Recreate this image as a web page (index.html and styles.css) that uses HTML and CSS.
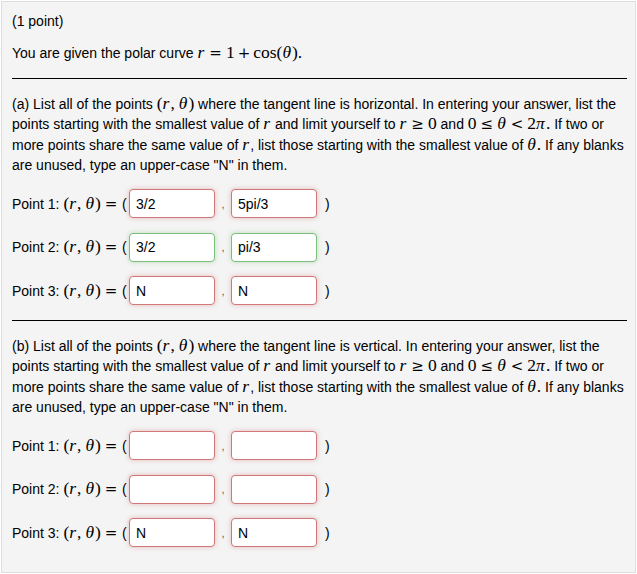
FILE: index.html
```html
<!DOCTYPE html>
<html>
<head>
<meta charset="utf-8">
<link rel="stylesheet" href="styles.css">
</head>
<body>
<div class="problem">
  <p class="pts">(1 point)</p>
  <p class="intro">You are given the polar curve <span class="m"><i>r</i><span class="o">=</span>1<span class="o b">+</span>cos(<i>θ</i>).</span></p>
  <hr class="rule">
  <p class="para">(a) List all of the points <span class="m">(<i>r</i>,<span class="ts"></span><i>θ</i>)</span> where the tangent line is horizontal. In entering your answer, list the<br>points starting with the smallest value of <span class="m"><i>r</i></span> and limit yourself to <span class="m"><i>r</i><span class="o">≥</span>0</span> and <span class="m">0<span class="o">≤</span><i>θ</i><span class="o">&lt;</span>2<i>π</i>.</span> If two or<br>more points share the same value of <span class="m"><i>r</i></span>, list those starting with the smallest value of <span class="m"><i>θ</i>.</span> If any blanks<br>are unused, type an upper-case "N" in them.</p>
  <div class="points">
    <div class="row"><span class="lead">Point 1: <span class="m">(<i>r</i>,<span class="ts"></span><i>θ</i>)<span class="o">=</span></span></span><span class="par">(</span><span class="box bad">3/2</span><span class="comma">,</span><span class="box bad">5pi/3</span><span class="close">)</span></div>
    <div class="row"><span class="lead">Point 2: <span class="m">(<i>r</i>,<span class="ts"></span><i>θ</i>)<span class="o">=</span></span></span><span class="par">(</span><span class="box good">3/2</span><span class="comma">,</span><span class="box good">pi/3</span><span class="close">)</span></div>
    <div class="row"><span class="lead">Point 3: <span class="m">(<i>r</i>,<span class="ts"></span><i>θ</i>)<span class="o">=</span></span></span><span class="par">(</span><span class="box bad">N</span><span class="comma">,</span><span class="box bad">N</span><span class="close">)</span></div>
  </div>
  <hr class="rule">
  <p class="para">(b) List all of the points <span class="m">(<i>r</i>,<span class="ts"></span><i>θ</i>)</span> where the tangent line is vertical. In entering your answer, list the<br>points starting with the smallest value of <span class="m"><i>r</i></span> and limit yourself to <span class="m"><i>r</i><span class="o">≥</span>0</span> and <span class="m">0<span class="o">≤</span><i>θ</i><span class="o">&lt;</span>2<i>π</i>.</span> If two or<br>more points share the same value of <span class="m"><i>r</i></span>, list those starting with the smallest value of <span class="m"><i>θ</i>.</span> If any blanks<br>are unused, type an upper-case "N" in them.</p>
  <div class="points">
    <div class="row"><span class="lead">Point 1: <span class="m">(<i>r</i>,<span class="ts"></span><i>θ</i>)<span class="o">=</span></span></span><span class="par">(</span><span class="box bad"></span><span class="comma">,</span><span class="box bad"></span><span class="close">)</span></div>
    <div class="row"><span class="lead">Point 2: <span class="m">(<i>r</i>,<span class="ts"></span><i>θ</i>)<span class="o">=</span></span></span><span class="par">(</span><span class="box bad"></span><span class="comma">,</span><span class="box bad"></span><span class="close">)</span></div>
    <div class="row"><span class="lead">Point 3: <span class="m">(<i>r</i>,<span class="ts"></span><i>θ</i>)<span class="o">=</span></span></span><span class="par">(</span><span class="box bad">N</span><span class="comma">,</span><span class="box bad">N</span><span class="close">)</span></div>
  </div>
</div>
</body>
</html>
```

FILE: styles.css
```css
html, body {
  margin: 0;
  padding: 0;
  background: #ffffff;
}
body {
  font-family: "Liberation Sans", Arial, sans-serif;
  font-size: 14px;
  line-height: 20px;
  color: #000;
}
.problem {
  margin: 1px 0 0 1px;
  width: 615px;
  height: 551px;
  padding: 9px 8px 10px 10px;
  border: 1px solid #dedede;
  background: #f4f4f4;
}
.problem p {
  margin: 0;
}
.pts {
  margin-bottom: 12px !important;
}
.m {
  font-family: "Liberation Serif", "Times New Roman", serif;
  font-size: 17.5px;
  line-height: 12px;
  white-space: nowrap;
}
.m i {
  font-style: italic;
  padding-right: 1px;
}
.ts {
  display: inline-block;
  width: 4px;
}
.o {
  font-family: "DejaVu Serif", serif;
  font-size: 15px;
  line-height: 12px;
  margin: 0 4px;
}
.o.b {
  margin: 0 3px;
}
.rule {
  border: 0;
  border-top: 1px solid #000;
  height: 0;
  margin: 15px 0 15px 0;
}
.para {
  line-height: 20.3px;
}
.points {
  display: flex;
  flex-direction: column;
  gap: 14.5px;
  margin-top: 14px;
}
.row {
  display: flex;
  align-items: center;
  height: 29px;
}
.lead {
  width: 110px;
  white-space: nowrap;
}
.par {
  width: 7px;
}
.box {
  box-sizing: border-box;
  width: 86px;
  height: 29px;
  background: #fff;
  border: 1px solid #d07878;
  border-radius: 4px;
  padding: 0 6px;
  display: flex;
  align-items: center;
  box-shadow: 0 0 5px rgba(210, 110, 110, 0.45);
  color: #000;
}
.box.good {
  border-color: #7cbf7c;
  box-shadow: 0 0 5px rgba(110, 190, 110, 0.45);
}
.comma {
  width: 16px;
  text-align: center;
  color: #555;
  font-size: 11px;
}
.close {
  margin-left: 8px;
}
```
